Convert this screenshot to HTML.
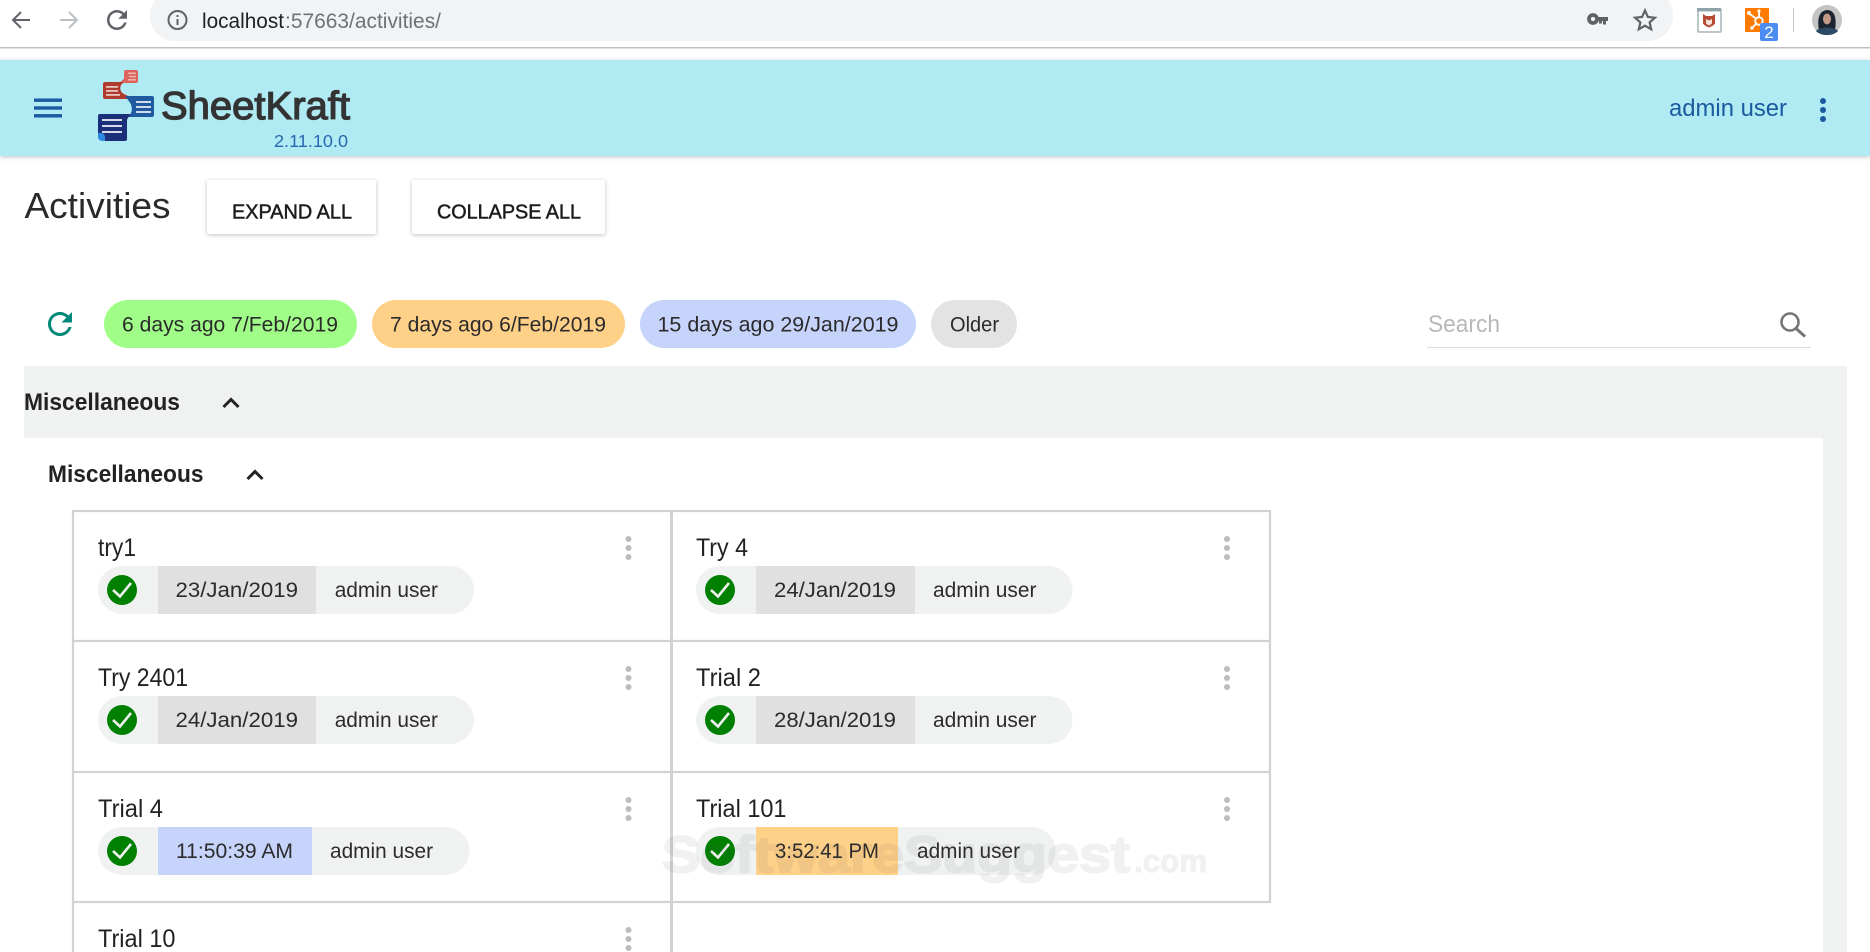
<!DOCTYPE html>
<html lang="en">
<head>
<meta charset="utf-8">
<title>Activities - SheetKraft</title>
<style>
html,body{margin:0;padding:0;background:#fff;width:1870px;height:952px;overflow:hidden}
svg{display:block;position:absolute;left:0;top:0}
text{font-family:"Liberation Sans",Arial,sans-serif;white-space:pre}
.t{font-size:21.500px;fill:#2b2b2b}
.c{font-size:21.500px;fill:#2b2b2b}
.h{font-size:25px;fill:#222}
.m{font-size:24.500px;font-weight:bold;fill:#222}
.b{font-size:20.500px;fill:#1c1c1c;stroke:#1c1c1c;stroke-width:.5px}
.line{stroke:#d2d2d2;stroke-width:2.200;fill:none}
.sh{filter:drop-shadow(0 1px 2px rgba(0,0,0,.25))}
</style>
</head>
<body>
<svg width="1870" height="952" viewBox="0 0 1870 952" xmlns="http://www.w3.org/2000/svg">
<defs>
  <g id="chk">
    <ellipse cx="0" cy="0" rx="15" ry="15" fill="#008000"/>
    <path d="M-9 0L-2 6.500L9 -7" fill="none" stroke="#f0f0f0" stroke-width="2.600"/>
  </g>
  <g id="keb" fill="#bdbdbd">
    <circle cx="0" cy="-9" r="3"/><circle cx="0" cy="0" r="3"/><circle cx="0" cy="9" r="3"/>
  </g>
</defs>
<rect width="1870" height="952" fill="#fff"/>

<!-- browser chrome -->
<rect x="150" y="-10" width="1523" height="51" rx="25" fill="#f1f3f4"/>
<rect x="0" y="47" width="1870" height="1.500" fill="#c0c0c0"/>
<path d="M30 20H13M21 12l-8 8 8 8" fill="none" stroke="#5f6368" stroke-width="2"/>
<path d="M60 20H77M69 12l8 8-8 8" fill="none" stroke="#bdc1c6" stroke-width="2"/>
<path transform="translate(102 5) scale(1.250)" fill="#5f6368" d="M17.65 6.35C16.2 4.9 14.21 4 12 4c-4.42 0-7.99 3.58-7.99 8s3.57 8 7.99 8c3.73 0 6.84-2.55 7.73-6h-2.08c-.82 2.33-3.04 4-5.65 4-3.31 0-6-2.69-6-6s2.69-6 6-6c1.66 0 3.14.69 4.22 1.78L13 11h7V4l-2.35 2.35z"/>
<circle cx="177.500" cy="20" r="9" fill="none" stroke="#5f6368" stroke-width="2"/>
<rect x="176.500" y="19" width="2" height="6" fill="#5f6368"/><rect x="176.500" y="15" width="2" height="2" fill="#5f6368"/>
<text x="202" y="28" font-size="21" fill="#202124" textLength="82" lengthAdjust="spacingAndGlyphs">localhost</text>
<text x="285" y="28" font-size="21" fill="#6d7276" textLength="156" lengthAdjust="spacingAndGlyphs">:57663/activities/</text>
<circle cx="1593" cy="19" r="4" fill="none" stroke="#5f6368" stroke-width="3.800"/>
<path d="M1597 17h11v4h-2v3.500h-3v-3.500h-1v2.500h-3v-2.500h-2z" fill="#5f6368"/>
<path d="M1645 10.500l2.900 6.500 7 .7-5.300 4.700 1.600 6.900-6.200-3.600-6.200 3.600 1.600-6.900-5.300-4.700 7-.7z" fill="none" stroke="#5f6368" stroke-width="2.200"/>

<!-- extension icons -->
<rect x="1698" y="9" width="23" height="23" rx="1" fill="#fff" stroke="#a9b4b8" stroke-width="1.500"/>
<rect x="1697" y="8" width="24" height="3.400" fill="#8ea3a8"/>
<path d="M1703 14l3 2h6l3-2v9c0 1.500-3 3.300-6 4.500-3-1.200-6-3-6-4.500z" fill="#b84a33"/>
<path d="M1706 19l3 1.500 3-1.500v4c0 .8-1.500 1.700-3 2.500-1.500-.8-3-1.700-3-2.500z" fill="#f3e6e0"/>
<rect x="1745" y="8" width="24" height="24" fill="#ff7a00"/>
<g stroke="#fff" stroke-width="1.800" fill="none"><circle cx="1759" cy="21" r="3.800"/><path d="M1759 17v-5M1756 18.500l-7-5M1756 24l-4 4"/></g>
<circle cx="1749" cy="13" r="2" fill="#fff"/><circle cx="1752" cy="28" r="1.700" fill="#fff"/><circle cx="1759" cy="11" r="1.600" fill="#fff"/>
<rect x="1760" y="23" width="18" height="18" rx="2" fill="#4a8cf0"/>
<text x="1769" y="38" font-size="17" fill="#fff" text-anchor="middle">2</text>
<rect x="1793" y="8" width="1" height="24" fill="#c8c8c8"/>
<circle cx="1827" cy="20" r="15" fill="#c4c4c4"/>
<path d="M1819 30c-1.500-8-1.500-19 8-20 9 0 9.500 11 8 20-3 3-13 3-16 0z" fill="#1c2430"/>
<ellipse cx="1827" cy="19" rx="4" ry="5.500" fill="#c39a88"/>
<path d="M1816 31c3-4.500 19-4.500 22 0-5 5.500-17 5.500-22 0z" fill="#2c4a66"/>

<!-- app header -->
<g class="sh"><rect x="0" y="60" width="1870" height="96" fill="#b0ebf4"/></g>
<g fill="#1a5a9e"><rect x="34" y="98.500" width="28" height="3.400"/><rect x="34" y="106.300" width="28" height="3.400"/><rect x="34" y="114.100" width="28" height="3.400"/></g>

<!-- logo -->
<path d="M118 83c3-1 5-3 7-6l2 3-3 3z" fill="#d9605a"/>
<rect x="124" y="70" width="14" height="13" rx="2" fill="#dc625c"/>
<g fill="#efb5ad"><rect x="128" y="72.500" width="8" height="1.600"/><rect x="129" y="75.800" width="7" height="1.600"/><rect x="128" y="79" width="8" height="1.600"/></g>
<path d="M105 82h15c4 0 4 .5 3 1-3 2-3.500 6-1.500 9 2 2.500 6 4 11.500 5v2h-28a2 2 0 0 1-2-2V84a2 2 0 0 1 2-2z" fill="#b03a2e"/>
<g fill="#e7c6c0"><rect x="106" y="86" width="12" height="1.800"/><rect x="106" y="90" width="12" height="1.800"/><rect x="106" y="94" width="14" height="1.800"/></g>
<path d="M125 96h27a2 2 0 0 1 2 2v17a2 2 0 0 1-2 2h-25c1-.5 3-2 4-4 1.500-3 1-8-1.500-11-1.500-2-3-4-4.500-6z" fill="#1f5aa0"/>
<g fill="#cfdcea"><rect x="136" y="101" width="15" height="2"/><rect x="136" y="106" width="15" height="2"/><rect x="136" y="111" width="15" height="2"/></g>
<path d="M100 114h29l3 1c-3 1-5 3-5 6v18a2 2 0 0 1-2 2h-21l-6-5v-20a2 2 0 0 1 2-2z" fill="#1c2f7a"/>
<path d="M98 133h3c2.500 0 4 2 4 4v4h-2c-3.500 0-5-2-5-4z" fill="#2f8ae0"/>
<g fill="#d7dbe8"><rect x="102" y="119" width="20" height="2"/><rect x="102" y="125" width="20" height="2"/><rect x="102" y="131" width="20" height="2"/></g>
<text x="161" y="119" font-size="39" fill="#333" stroke="#333" stroke-width="1.300" textLength="189" lengthAdjust="spacingAndGlyphs">SheetKraft</text>
<text x="274" y="147" font-size="17.500" fill="#2a68b0" textLength="74" lengthAdjust="spacingAndGlyphs">2.11.10.0</text>

<text x="1669" y="116" font-size="24.500" fill="#1a5a9e" textLength="118" lengthAdjust="spacingAndGlyphs">admin user</text>
<g fill="#1a5a9e"><circle cx="1823" cy="101" r="3"/><circle cx="1823" cy="110" r="3"/><circle cx="1823" cy="119" r="3"/></g>

<!-- title row -->
<text x="24.500" y="218" font-size="36" fill="#2a2a2a" textLength="146" lengthAdjust="spacingAndGlyphs">Activities</text>
<g class="sh"><rect x="207" y="180" width="169" height="54" rx="2" fill="#fff"/></g>
<g class="sh"><rect x="412" y="180" width="193" height="54" rx="2" fill="#fff"/></g>
<text class="b" x="232" y="218.500" textLength="120" lengthAdjust="spacingAndGlyphs">EXPAND ALL</text>
<text class="b" x="437" y="218.500" textLength="144" lengthAdjust="spacingAndGlyphs">COLLAPSE ALL</text>

<!-- filter chips -->
<path transform="translate(42 306) scale(1.500)" fill="#00897b" d="M17.65 6.35C16.2 4.9 14.21 4 12 4c-4.42 0-7.99 3.58-7.99 8s3.57 8 7.99 8c3.73 0 6.84-2.55 7.73-6h-2.08c-.82 2.33-3.04 4-5.65 4-3.31 0-6-2.69-6-6s2.69-6 6-6c1.66 0 3.14.69 4.22 1.78L13 11h7V4l-2.35 2.35z"/>
<rect x="104" y="300" width="253" height="48" rx="24" fill="#a0fd88"/>
<rect x="372" y="300" width="253" height="48" rx="24" fill="#ffd088"/>
<rect x="640" y="300" width="276" height="48" rx="24" fill="#c6d3fb"/>
<rect x="931" y="300" width="86" height="48" rx="24" fill="#e3e3e3"/>
<text class="c" x="122" y="331.500" textLength="216" lengthAdjust="spacingAndGlyphs">6 days ago 7/Feb/2019</text>
<text class="c" x="390" y="331.500" textLength="216" lengthAdjust="spacingAndGlyphs">7 days ago 6/Feb/2019</text>
<text class="c" x="657.500" y="331.500" textLength="241" lengthAdjust="spacingAndGlyphs">15 days ago 29/Jan/2019</text>
<text class="c" x="950" y="331.500" textLength="49" lengthAdjust="spacingAndGlyphs">Older</text>

<!-- search -->
<text x="1428" y="332" font-size="24.500" fill="#b8b8b8" textLength="72" lengthAdjust="spacingAndGlyphs">Search</text>
<rect x="1427" y="347" width="384" height="1" fill="#dcdcdc"/>
<circle cx="1790" cy="322" r="8.500" fill="none" stroke="#757575" stroke-width="2.600"/>
<path d="M1796 328.500L1805 336.500" stroke="#757575" stroke-width="3"/>

<!-- section -->
<rect x="24" y="366" width="1823" height="586" fill="#f0f2f2"/>
<rect x="24" y="438" width="1799" height="514" fill="#fff"/>
<text class="m" x="24" y="410" textLength="156" lengthAdjust="spacingAndGlyphs">Miscellaneous</text>
<path d="M223.500 407l7.500-7.500 7.500 7.500" fill="none" stroke="#222" stroke-width="3"/>
<text class="m" x="48" y="482" textLength="155.500" lengthAdjust="spacingAndGlyphs">Miscellaneous</text>
<path d="M247.500 479l7.500-7.500 7.500 7.500" fill="none" stroke="#222" stroke-width="3"/>

<!-- grid lines -->
<path class="line" d="M73 510V952M1270 510V903M72 511H1271M72 641H1271M72 772H1271M72 902H1271"/>
<path d="M671.500 510V952" stroke="#d2d2d2" stroke-width="3" fill="none"/>

<!-- row 1 -->
<text class="h" x="98" y="556" textLength="38" lengthAdjust="spacingAndGlyphs">try1</text>
<rect x="98" y="566" width="376" height="48" rx="24" fill="#f0f2f2"/>
<rect x="158" y="566" width="158" height="48" fill="#e0e0e0"/>
<use href="#chk" x="122" y="590"/>
<text class="t" x="175.500" y="597" textLength="122.500" lengthAdjust="spacingAndGlyphs">23/Jan/2019</text>
<text class="t" x="334.700" y="597" textLength="103.300" lengthAdjust="spacingAndGlyphs">admin user</text>
<use href="#keb" x="628.500" y="548"/>

<text class="h" x="696" y="556" textLength="52" lengthAdjust="spacingAndGlyphs">Try 4</text>
<rect x="696" y="566" width="376.500" height="48" rx="24" fill="#f0f2f2"/>
<rect x="756" y="566" width="159" height="48" fill="#e0e0e0"/>
<use href="#chk" x="720" y="590"/>
<text class="t" x="774" y="597" textLength="122" lengthAdjust="spacingAndGlyphs">24/Jan/2019</text>
<text class="t" x="933" y="597" textLength="103.500" lengthAdjust="spacingAndGlyphs">admin user</text>
<use href="#keb" x="1227" y="548"/>

<!-- row 2 -->
<text class="h" x="98" y="686" textLength="90" lengthAdjust="spacingAndGlyphs">Try 2401</text>
<rect x="98" y="696" width="376" height="48" rx="24" fill="#f0f2f2"/>
<rect x="158" y="696" width="158" height="48" fill="#e0e0e0"/>
<use href="#chk" x="122" y="720"/>
<text class="t" x="175.500" y="727" textLength="122.500" lengthAdjust="spacingAndGlyphs">24/Jan/2019</text>
<text class="t" x="334.700" y="727" textLength="103.300" lengthAdjust="spacingAndGlyphs">admin user</text>
<use href="#keb" x="628.500" y="678"/>

<text class="h" x="696" y="686" textLength="65" lengthAdjust="spacingAndGlyphs">Trial 2</text>
<rect x="696" y="696" width="376.500" height="48" rx="24" fill="#f0f2f2"/>
<rect x="756" y="696" width="159" height="48" fill="#e0e0e0"/>
<use href="#chk" x="720" y="720"/>
<text class="t" x="774" y="727" textLength="122" lengthAdjust="spacingAndGlyphs">28/Jan/2019</text>
<text class="t" x="933" y="727" textLength="103.500" lengthAdjust="spacingAndGlyphs">admin user</text>
<use href="#keb" x="1227" y="678"/>

<!-- row 3 -->
<text class="h" x="98" y="817" textLength="65" lengthAdjust="spacingAndGlyphs">Trial 4</text>
<rect x="98" y="827" width="371.500" height="48" rx="24" fill="#f0f2f2"/>
<rect x="158" y="827" width="154" height="48" fill="#c6d3fb"/>
<use href="#chk" x="122" y="851"/>
<text class="t" x="176" y="858" textLength="117" lengthAdjust="spacingAndGlyphs">11:50:39 AM</text>
<text class="t" x="330" y="858" textLength="103" lengthAdjust="spacingAndGlyphs">admin user</text>
<use href="#keb" x="628.500" y="809"/>

<text class="h" x="696" y="817" textLength="90.500" lengthAdjust="spacingAndGlyphs">Trial 101</text>
<rect x="696" y="827" width="359.500" height="48" rx="24" fill="#f0f2f2"/>
<rect x="756" y="827" width="142" height="48" fill="#ffd088"/>
<use href="#chk" x="720" y="851"/>
<text class="t" x="775" y="858" textLength="104" lengthAdjust="spacingAndGlyphs">3:52:41 PM</text>
<text class="t" x="917" y="858" textLength="103" lengthAdjust="spacingAndGlyphs">admin user</text>
<use href="#keb" x="1227" y="809"/>

<!-- row 4 -->
<text class="h" x="98" y="947" textLength="77.500" lengthAdjust="spacingAndGlyphs">Trial 10</text>
<use href="#keb" x="628.500" y="939"/>

<!-- watermark -->
<g opacity=".08" fill="#555" stroke="#555">
<text x="662" y="872" font-size="51" font-weight="bold" stroke-width="2" textLength="468" lengthAdjust="spacingAndGlyphs">SoftwareSuggest</text>
<text x="1134" y="872" font-size="32" font-weight="bold" stroke-width="1" textLength="73" lengthAdjust="spacingAndGlyphs">.com</text>
</g>
</svg>
</body>
</html>
